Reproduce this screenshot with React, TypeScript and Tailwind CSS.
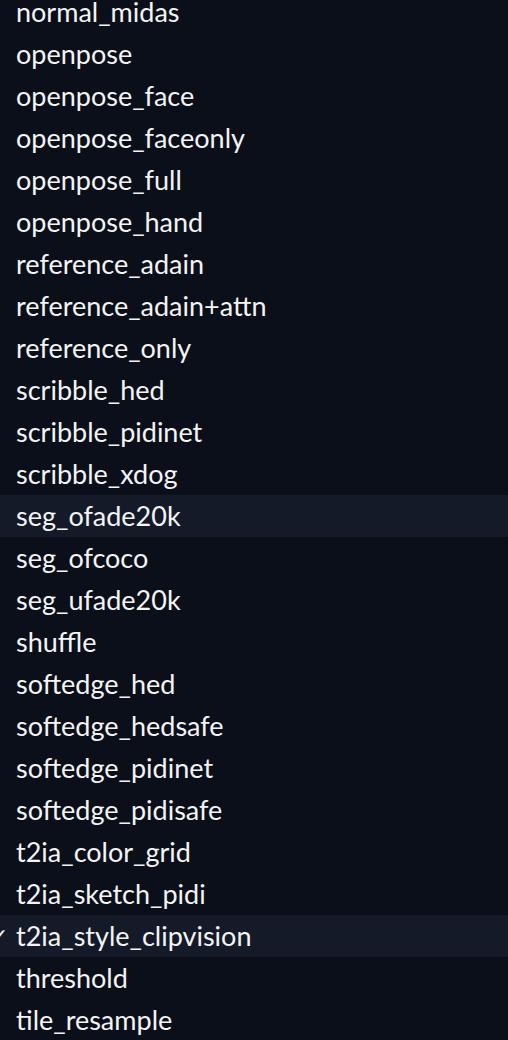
const items = [
  'normal_midas',
  'openpose',
  'openpose_face',
  'openpose_faceonly',
  'openpose_full',
  'openpose_hand',
  'reference_adain',
  'reference_adain+attn',
  'reference_only',
  'scribble_hed',
  'scribble_pidinet',
  'scribble_xdog',
  'seg_ofade20k',
  'seg_ofcoco',
  'seg_ufade20k',
  'shuffle',
  'softedge_hed',
  'softedge_hedsafe',
  'softedge_pidinet',
  'softedge_pidisafe',
  't2ia_color_grid',
  't2ia_sketch_pidi',
  't2ia_style_clipvision',
  'threshold',
  'tile_resample',
];

const hovered = 'seg_ofade20k';
const selected = 't2ia_style_clipvision';

export default function App() {
  return (
    <div className="h-[1040px] w-[508px] overflow-hidden bg-[#0b0f19]">
      <ul className="-mt-[9px] font-['Lato',sans-serif] text-[27px] leading-none text-[#f3f4f6]">
        {items.map((item) => {
          const active = item === hovered || item === selected;
          return (
            <li
              key={item}
              className={`relative flex h-[42px] items-center whitespace-nowrap pb-[2px] pl-4 ${active ? 'bg-[#151a28]' : ''}`}
            >
              {item === selected && (
                <span className="absolute -left-[10px] top-1/2 -translate-y-1/2 text-[22px]">✓</span>
              )}
              {item}
            </li>
          );
        })}
      </ul>
    </div>
  );
}
